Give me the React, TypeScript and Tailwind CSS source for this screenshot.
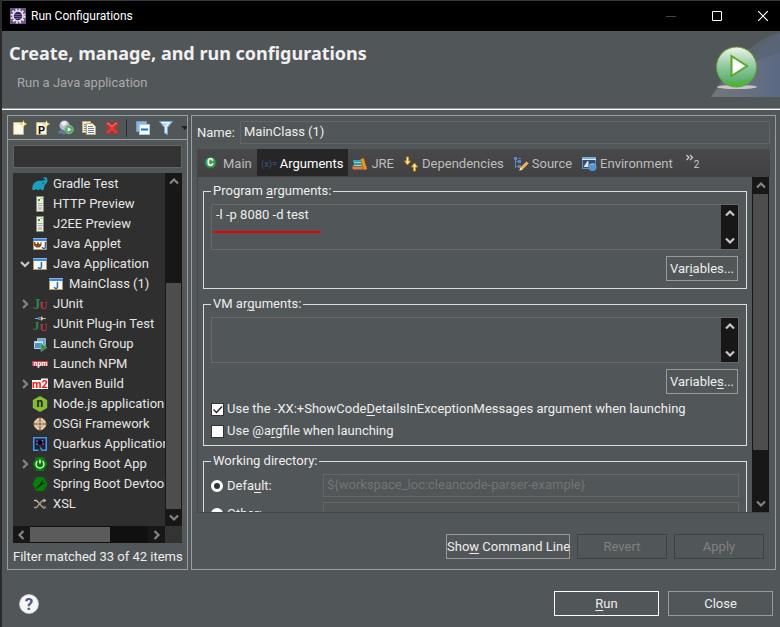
import React from "react";

type IconProps = { children: React.ReactNode; className?: string };

const Icon = ({ children, className = "size-4" }: IconProps) => (
  <svg viewBox="0 0 16 16" className={`${className} shrink-0`} aria-hidden="true">
    {children}
  </svg>
);

/* toolbar icons */
const NewIcon = ({ proto = false }: { proto?: boolean }) => (
  <Icon>
    <path d="M1.5 2.5h10v12h-10z" fill="#fbf3d5" stroke="#c9b578" />
    <path d="M3 5h6v3h2v5H3z" fill="#fff" opacity=".6" />
    <path d="M11.500 0l1.200 2.800 2.800 1.200-2.800 1.200-1.200 2.800-1.200-2.800L7.500 4l2.800-1.200z" fill="#e8bf45" />
    <path d="M11.500 2v4M9.500 4h4" stroke="#fff" />
    {proto && (
      <text x="3" y="14" fontSize="11" fontWeight="bold" fill="#111">P</text>
    )}
  </Icon>
);

const ExportIcon = () => (
  <Icon>
    <circle cx="6.500" cy="5.500" r="5" fill="#b9bfcc" />
    <path d="M3 3l3-2 3 1-1 3-3 1zM7 7l3-1 1 2-2 2z" fill="#eef0f4" />
    <path d="M0 11l4-1 4 3-2 2-3-2-2 1z" fill="#5d7fa5" />
    <circle cx="11" cy="9.500" r="4.300" fill="#5aa96a" stroke="#8fc797" strokeWidth=".8" />
    <path d="M9.700 7.300l3.600 2.200-3.600 2.200z" fill="#fff" />
  </Icon>
);

const CopyIcon = () => (
  <Icon>
    <path d="M1.500 1.500h8v11h-8z" fill="#f5edcf" stroke="#c2ae77" />
    <path d="M3 4.500h3M3 6.500h3M3 8.500h3M3 10.500h3" stroke="#5f83b5" />
    <path d="M5.500 3.500h6l3 3v8h-9z" fill="#faf5e2" stroke="#bfa972" />
    <path d="M7 6.500h5M7 8.500h6M7 10.500h6M7 12.500h6" stroke="#5f83b5" />
  </Icon>
);

const DeleteIcon = () => (
  <Icon>
    <path
      d="M1.500 4L4 1.500 8 5l4-3.500L14.500 4l-4 4 4 4L12 14.500 8 11l-4 3.500L1.500 12l4-4z"
      fill="#dd3c38"
      stroke="#b8201f"
      strokeWidth=".7"
    />
    <path d="M3 4l1.500-1L8 6.500 11.500 3 13 4" fill="none" stroke="#f47d75" />
  </Icon>
);

const CollapseIcon = () => (
  <Icon>
    <path d="M1.500 1.500h10v10h-10z" fill="#8fb6dc" stroke="#6f9ccb" />
    <path d="M4.500 4.500h10v10h-10z" fill="#f4faff" stroke="#a9c8e6" />
    <path d="M6 9.500h7" stroke="#1b6fb5" strokeWidth="2" />
  </Icon>
);

const FilterIcon = () => (
  <Icon>
    <path d="M1.500 1.500h13l-5 6v7l-3 -1.500v-5.500z" fill="#b9d9f1" stroke="#78a8d0" />
    <path d="M4 2.500h7L8 6.500v6" fill="none" stroke="#fff" />
  </Icon>
);

/* tree icons */
const GradleIcon = () => (
  <Icon>
    <path
      d="M.5 14c-.8-4 .9-7.500 4.300-8.800C7 4.300 9 5 11 4.500c1.500-.3 2.600-.8 2.200-1.600-.3-.5-1-.3-1.300.2L10.800 2.200C12 .6 14.700.8 15.300 3c.8 2.500-.8 4.600-2.600 6-.3 2-.8 3-1.200 5H9.200c0-1.500-2-1.500-2 0H5c0-1.500-2-1.500-2 0z"
      fill="#1b9fc0"
    />
    <circle cx="11" cy="7" r=".7" fill="#2f2f2f" />
  </Icon>
);

const ServerIcon = () => (
  <Icon>
    <path d="M4.500 .5h7v15h-7z" fill="#eef0e2" stroke="#8a8d70" />
    <path d="M6 3h2v2H6z" fill="#2ea52f" />
    <path d="M8.500 2.500h2M6 7.500h4.500M6 9.500h4.500" stroke="#9aa9b8" />
    <path d="M6 11h4v3H6z" fill="#bac4cf" />
  </Icon>
);

const JavaWindowIcon = ({ applet = false }: { applet?: boolean }) => (
  <Icon>
    <path d="M1.500 2.500h13v11h-13z" fill="#f3f8fd" stroke="#b49b62" />
    <path d="M1 2h14v3H1z" fill="#3f86cd" />
    <path d="M1 2.500h14" stroke="#83b5e6" />
    {applet && <path d="M2 6h1.500v2h1.500V6.500H7V8h1.500V6H9.500v3.500L7.500 11.500h-3L2 9.500z" fill="#8b4a1c" />}
    <text x={applet ? 9.5 : 5.5} y="12.500" fontSize="9" fontWeight="bold" fill="#245b9b">J</text>
  </Icon>
);

const JUnitIcon = ({ plugin = false }: { plugin?: boolean }) => (
  <Icon>
    {plugin && (
      <>
        <path d="M3 2.500h11" stroke="#93a8d4" />
        <path d="M6 1h4v3H6z" fill="#4f73c2" />
        <path d="M9 0l3 2.500L9 5z" fill="#edc85a" />
      </>
    )}
    <text x="1" y={plugin ? 14 : 13} fontSize={plugin ? 13 : 15} fontFamily="Liberation Serif" fontWeight="bold" fill="#278354">J</text>
    <text x="7.500" y={plugin ? 15 : 13} fontSize="11" fontFamily="Liberation Serif" fontWeight="bold" fill="#ba354a">U</text>
  </Icon>
);

const LaunchGroupIcon = () => (
  <Icon>
    <path d="M5.500 2.500h8v7h-8z" fill="#6fa8d2" stroke="#b2cfe4" strokeWidth=".7" />
    <path d="M2.500 5.500h8v7h-8z" fill="#4f91c5" stroke="#b5d3e8" />
    <path d="M3 6.500h7" stroke="#d6e9f5" />
    <path d="M9 7.500l6 4-6 4z" fill="#36914d" stroke="#77b886" strokeWidth=".6" />
  </Icon>
);

const NpmIcon = () => (
  <Icon>
    <path d="M0 5h16v5H8v1H5v-1H0z" fill="#c23b40" />
    <text x="1.500" y="9.500" fontSize="7" fontWeight="bold" fill="#fff">npm</text>
  </Icon>
);

const MavenIcon = () => (
  <Icon>
    <path d="M0 4h9V2.500h7V13H0z" fill="#fff" />
    <text x="0" y="12" fontSize="11" fontWeight="bold" fill="#ee1717">m2</text>
  </Icon>
);

const NodeIcon = () => (
  <Icon>
    <path d="M8 0l7.200 4v8L8 16 .8 12V4z" fill="#85bd39" />
    <text x="4.500" y="11" fontSize="12" fontWeight="bold" fill="#1e2b12">n</text>
  </Icon>
);

const OsgiIcon = () => (
  <Icon>
    <circle cx="8" cy="8" r="6" fill="#e9c9a7" stroke="#b88a66" />
    <path d="M6 2.500v11M10 2.500v11M2.500 6h11M2.500 10h11" stroke="#fff1df" strokeWidth=".8" />
    <circle cx="8" cy="8" r="3.500" fill="none" stroke="#b88a66" strokeWidth=".8" />
    <path d="M8 1.500v13M1.500 8h13" stroke="#7d5c4a" />
  </Icon>
);

const QuarkusIcon = () => (
  <Icon>
    <path d="M6.500 14.250H1.750V1.750h12.500v12.500H10L8.500 11.500" fill="#17233c" stroke="#4796ed" strokeWidth="1.500" />
    <path d="M8 4l2 1.500v2L8 9 6 7.500v-2z" fill="#05080f" />
    <path d="M5 4v2M11 7v2" stroke="#ed2451" strokeWidth="1.400" />
    <path d="M10.500 4v1.500M5 7.500v1.500" stroke="#55a3f5" strokeWidth="1.300" />
    <path d="M7.300 10h1.400" stroke="#ed2451" />
  </Icon>
);

const SpringIcon = ({ tools = false }: { tools?: boolean }) => (
  <Icon>
    <path d="M4.500 1.500h7L15 8l-3.500 6.500h-7L1 8z" fill="#087d0b" stroke="#087d0b" strokeLinejoin="round" />
    {tools ? (
      <path d="M4 12l5-5q-.5-2.500 2.500-3l-1 2 1 1 1.500-1q0 3-3 2.500l-5 4.500z" fill="#082d0b" />
    ) : (
      <>
        <path d="M5.500 5a4 4 0 105 0" fill="none" stroke="#e9f5e9" strokeWidth="1.300" />
        <path d="M8 3.500v4" stroke="#fff" strokeWidth="1.400" />
      </>
    )}
  </Icon>
);

const XslIcon = () => (
  <Icon>
    <path d="M2 4.500h2.500l6.500 7h3M2 11.500h2.500l6-7h3" fill="none" stroke="#a99d83" strokeWidth="1.300" />
    <path d="M11.500 2.500l3 2-3 2z" fill="#c5b897" />
    <path d="M11.500 9.500l3 2-3 2z" fill="#6f8a80" />
    <path d="M2 4.500h2.500l2 2.200" fill="none" stroke="#dbcba5" />
  </Icon>
);

/* tab icons */
const MainTabIcon = () => (
  <Icon>
    <circle cx="6.500" cy="6.500" r="5.500" fill="#3d9a50" stroke="#277b3c" />
    <text x="3" y="10" fontSize="10" fontWeight="bold" fill="#fff">C</text>
  </Icon>
);

const ArgsIcon = () => (
  <Icon>
    <text x="0" y="11" fontSize="9" fontWeight="bold" fill="#37496d">(x)=</text>
  </Icon>
);

const JreIcon = () => (
  <Icon>
    <path d="M0 10.500h11v3H1z" fill="#d68052" stroke="#a9593a" strokeWidth=".6" />
    <path d="M2 7h8v3H1z" fill="#279f9c" />
    <path d="M1 4h8v2.500H1z" fill="#38a4bb" />
    <path d="M2 9.500h8M2 6.500h7" stroke="#d6e7dc" strokeWidth=".7" />
    <path d="M8.500 3.500l3-1.500 3.500 11-3 1z" fill="#e89a25" stroke="#b96e1c" strokeWidth=".6" />
  </Icon>
);

const DepsIcon = () => (
  <Icon>
    <path d="M3.500 1h2v4h2l-3 4-3-4h2z" fill="#ffe398" stroke="#d79119" strokeWidth=".9" />
    <path d="M10.500 15h2v-4h2l-3-4-3 4h2z" fill="#ffe398" stroke="#d79119" strokeWidth=".9" />
  </Icon>
);

const SourceIcon = () => (
  <Icon>
    <path d="M2.500 2v10M2.500 5.500h4M2.500 10.500h3M5 2.500h3" fill="none" stroke="#5e82c4" />
    <path d="M1 1h3v3H1zM5 4h3v3H5zM5 9h3v3H5z" fill="#5b84cc" />
    <path d="M6.500 14.500l1-3 6-6 2 2-6 6z" fill="#eeb463" stroke="#bd813b" strokeWidth=".6" />
    <path d="M6.500 14.500l1-3 2 2z" fill="#fce8c7" />
  </Icon>
);

const EnvIcon = () => (
  <Icon>
    <path d="M1.500 1.500h13v11h-13z" fill="#39496a" stroke="#5a8fca" />
    <path d="M1 1h14v3H1z" fill="#6fb0ea" />
    <path d="M1 3.500h14" stroke="#e3effa" />
    <path d="M2.500 11l4-6h1v6z" fill="#dfe6f0" />
    <circle cx="11.500" cy="11" r="4" fill="#5797cf" />
    <path d="M9.500 9q2-2 4 0" fill="none" stroke="#83c0e5" />
  </Icon>
);

const chevrons = {
  up: "M4 10l4-4 4 4",
  down: "M4 6l4 4 4-4",
  left: "M10 4L6 8l4 4",
  right: "M6 4l4 4-4 4",
};

const Chevron = ({ dir, className = "size-4" }: { dir: keyof typeof chevrons; className?: string }) => (
  <Icon className={className}>
    <path d={chevrons[dir]} fill="none" stroke="currentColor" strokeWidth="2.200" />
  </Icon>
);

/* a "&" in the text underlines the letter after it */
const Label = ({ text }: { text: string }) => {
  const [before, after] = text.split("&");
  if (after === undefined) return <>{text}</>;
  return (
    <>
      {before}
      <span className="underline underline-offset-2">{after[0]}</span>
      {after.slice(1)}
    </>
  );
};

const treeItems = [
  { name: "Gradle Test", icon: <GradleIcon /> },
  { name: "HTTP Preview", icon: <ServerIcon /> },
  { name: "J2EE Preview", icon: <ServerIcon /> },
  { name: "Java Applet", icon: <JavaWindowIcon applet /> },
  { name: "Java Application", icon: <JavaWindowIcon />, arrow: "open" },
  { name: "MainClass (1)", icon: <JavaWindowIcon />, child: true },
  { name: "JUnit", icon: <JUnitIcon />, arrow: "closed" },
  { name: "JUnit Plug-in Test", icon: <JUnitIcon plugin /> },
  { name: "Launch Group", icon: <LaunchGroupIcon /> },
  { name: "Launch NPM", icon: <NpmIcon /> },
  { name: "Maven Build", icon: <MavenIcon />, arrow: "closed" },
  { name: "Node.js application", icon: <NodeIcon /> },
  { name: "OSGi Framework", icon: <OsgiIcon /> },
  { name: "Quarkus Application", icon: <QuarkusIcon /> },
  { name: "Spring Boot App", icon: <SpringIcon />, arrow: "closed" },
  { name: "Spring Boot Devtools", icon: <SpringIcon tools /> },
  { name: "XSL", icon: <XslIcon /> },
];

const tools = [
  { name: "New configuration", icon: <NewIcon /> },
  { name: "New prototype", icon: <NewIcon proto /> },
  { name: "Export", icon: <ExportIcon /> },
  { name: "Duplicate", icon: <CopyIcon /> },
  { name: "Delete", icon: <DeleteIcon /> },
];

const tabs = [
  { name: "Main", icon: <MainTabIcon /> },
  { name: "Arguments", icon: <ArgsIcon />, active: true },
  { name: "JRE", icon: <JreIcon /> },
  { name: "Dependencies", icon: <DepsIcon /> },
  { name: "Source", icon: <SourceIcon /> },
  { name: "Environment", icon: <EnvIcon /> },
];

const TitleBar = () => (
  <div className="flex h-[31px] shrink-0 items-center border-t border-[#3a3a3a] bg-black pr-3 pl-2 text-white">
    <svg viewBox="0 0 16 16" className="size-4" aria-hidden="true">
      <path d="M0 0h16v16H0z" fill="#69528a" />
      <circle cx="8" cy="8" r="6.500" fill="none" stroke="#e8e5ee" strokeWidth="2" strokeDasharray="1.800 1.600" />
      <circle cx="8" cy="8" r="5" fill="#31264d" stroke="#efedf3" strokeWidth="1.500" />
      <path d="M4 6.500h8M4 8.500h8M5 10.500h6" stroke="#786aa0" strokeWidth=".8" />
    </svg>
    <h1 className="ml-[5px] text-xs">Run Configurations</h1>
    <div className="ml-auto flex gap-9">
      <button aria-label="Minimize" className="text-[#444]">
        <svg viewBox="0 0 10 10" className="size-[10px]"><path d="M0 5.500h10" stroke="currentColor" /></svg>
      </button>
      <button aria-label="Maximize">
        <svg viewBox="0 0 10 10" className="size-[10px]"><path d="M.5 .5h9v9h-9z" fill="none" stroke="currentColor" /></svg>
      </button>
      <button aria-label="Close window">
        <svg viewBox="0 0 10 10" className="size-[10px]"><path d="M0 0l10 10M10 0L0 10" stroke="currentColor" strokeWidth="1.200" /></svg>
      </button>
    </div>
  </div>
);

const Header = () => (
  <header className="flex h-[79px] shrink-0 justify-between border-b border-white bg-[#515658] shadow-[inset_0_-1px_0_#929596]">
    <div className="pt-2 pl-[7px]">
      <h2 className="font-['Noto_Sans',sans-serif] text-lg leading-7 font-bold text-[#f0f0f0]">
        Create, manage, and run configurations
      </h2>
      <p className="mt-[6px] ml-2 leading-5 text-[#aaaaaa]">Run a Java application</p>
    </div>
    <svg viewBox="0 0 70 66" className="h-[66px] w-[70px] shrink-0" aria-hidden="true">
      <defs>
        <linearGradient id="beam" x1="0" x2="1">
          <stop offset="0" stopColor="#777b7d" />
          <stop offset="1" stopColor="#5c6b86" />
        </linearGradient>
        <linearGradient id="ball" x1="0" x2="0" y1="0" y2="1">
          <stop offset="0" stopColor="#eef6e6" />
          <stop offset=".5" stopColor="#8fc69b" />
          <stop offset=".85" stopColor="#5fae74" />
          <stop offset="1" stopColor="#4fb41c" />
        </linearGradient>
      </defs>
      <path d="M1 66Q32 12 70 1v65z" fill="url(#beam)" opacity=".45" />
      <path d="M22 66Q36 20 70 2v64z" fill="#5d6f91" opacity=".3" />
      <path d="M1 66Q26 32 70 22v44z" fill="url(#beam)" opacity=".8" />
      <ellipse cx="27" cy="56" rx="20" ry="2" fill="#c9c5cb" />
      <circle cx="26.500" cy="36" r="20" fill="url(#ball)" stroke="#679d33" />
      <path d="M8 36a18.500 18.500 0 0037 0q-1 14-18.500 15T8 36" fill="#46bc22" opacity=".6" />
      <path d="M21.500 25v20L37 35z" fill="#fff" stroke="#59a62b" strokeWidth="2" />
    </svg>
  </header>
);

const VScroll = ({ thumb, className = "" }: { thumb?: string; className?: string }) => (
  <div className={`flex w-[17px] shrink-0 flex-col items-center bg-[#171717] ${className}`}>
    <Chevron dir="up" className="h-[17px] w-4" />
    <div className="flex w-full min-h-0 flex-1 flex-col px-px">
      {thumb && <div className={`w-full bg-[#4d4d4d] ${thumb}`} />}
    </div>
    <Chevron dir="down" className="h-[17px] w-4" />
  </div>
);

const Sidebar = () => (
  <aside className="flex w-[181px] shrink-0 flex-col border border-[#9a9d9e]">
    <div className="flex h-6 shrink-0 items-center overflow-hidden border-b border-[#9a9d9e] pl-1">
      <div className="flex shrink-0 gap-[7px]">
        {tools.map((tool) => (
          <button key={tool.name} aria-label={tool.name}>{tool.icon}</button>
        ))}
      </div>
      <div className="mr-2 ml-[6px] h-[18px] w-px shrink-0 bg-[#2b2d2e]" />
      <div className="flex shrink-0 gap-[7px]">
        <button aria-label="Collapse all"><CollapseIcon /></button>
        <button aria-label="Filter"><FilterIcon /></button>
        <button aria-label="Filter menu">
          <svg viewBox="0 0 8 4" className="h-1 w-2"><path d="M0 0h8L4 4z" fill="#222" /></svg>
        </button>
      </div>
    </div>
    <div className="flex min-h-0 flex-1 flex-col px-[5px] pt-[5px]">
      <input
        aria-label="Filter configurations"
        className="h-[23px] shrink-0 border border-[#646464] bg-[#333] px-1 outline-none"
      />
      <div className="mt-[5px] flex min-h-0 flex-1 bg-[#2f2f2f]">
        <ul className="min-w-0 flex-1 overflow-hidden pt-px text-[#e6e6e6]">
          {treeItems.map((item) => (
            <li key={item.name} className={`flex h-5 items-center whitespace-nowrap ${item.child ? "pl-5" : "pl-1"}`}>
              <span className={`w-[15px] shrink-0 ${item.arrow === "open" ? "text-[#c8c8c8]" : "text-[#858585]"}`}>
                {item.arrow && <Chevron dir={item.arrow === "open" ? "down" : "right"} />}
              </span>
              {item.icon}
              <span className="ml-[5px]">{item.name}</span>
            </li>
          ))}
        </ul>
        <VScroll thumb="mt-auto h-[71%]" className="text-[#858585]" />
      </div>
      <div className="flex h-[17px] shrink-0 bg-[#333] text-[#858585]">
        <div className="flex min-w-0 flex-1 items-center bg-[#171717]">
          <Chevron dir="left" className="h-4 w-[17px]" />
          <div className="h-full min-w-0 flex-1 bg-[#101010] py-px">
            <div className="h-full w-[68%] bg-[#5b5b5b]" />
          </div>
          <Chevron dir="right" className="h-4 w-[17px]" />
        </div>
        <div className="w-[17px]" />
      </div>
      <p className="h-[26px] shrink-0 pt-1 leading-5 whitespace-nowrap">Filter matched 33 of 42 items</p>
    </div>
  </aside>
);

const ArgsBox = ({ title, value, button, children }: { title: string; value: string; button: string; children?: React.ReactNode }) => (
  <fieldset className="min-w-0 border border-[#dcdcdc] px-[7px] pb-[7px]">
    <legend className="h-4 px-[2px] leading-4"><Label text={title} /></legend>
    <div className="relative mt-[5px] flex h-[46px] border border-[#696765]">
      <textarea
        aria-label={title.replace("&", "")}
        defaultValue={value}
        className="min-w-0 flex-1 resize-none overflow-hidden bg-transparent px-1 leading-5 outline-none"
      />
      <VScroll className="text-[#c8c8c8]" />
      {value && <div className="absolute top-[26px] left-px h-[2px] w-[108px] rounded-full bg-[#f00000]" />}
    </div>
    <button className="mt-[6px] mr-px ml-auto block h-[25px] w-[72px] border border-[#9a9a9a]">
      <Label text={button} />
    </button>
    {children}
  </fieldset>
);

const Check = ({ text, checked = false }: { text: string; checked?: boolean }) => (
  <label className="relative flex h-[22px] items-center gap-[3px] whitespace-nowrap">
    <input type="checkbox" defaultChecked={checked} className="peer size-[13px] appearance-none border border-[#333] bg-white" />
    <svg viewBox="0 0 13 13" className="invisible absolute left-0 size-[13px] peer-checked:visible" aria-hidden="true">
      <path d="M2.500 6.500l3 3 5.500-6" fill="none" stroke="#222" strokeWidth="1.300" />
    </svg>
    <span><Label text={text} /></span>
  </label>
);

const DirRow = ({ text, value, checked = false }: { text: string; value: string; checked?: boolean }) => (
  <div className="flex h-[23px] items-center">
    <label className="flex w-28 items-center gap-1">
      <input
        type="radio"
        name="directory"
        defaultChecked={checked}
        className="size-3 appearance-none rounded-full border-[3px] border-white bg-white checked:bg-[#333]"
      />
      <span><Label text={text} /></span>
    </label>
    <input
      aria-label={text.replace("&", "") + " path"}
      disabled
      defaultValue={value}
      className="h-full min-w-0 flex-1 border border-[#686664] bg-transparent px-[3px] pb-[2px] text-[#747474]"
    />
  </div>
);

const MainPanel = () => (
  <main className="flex min-w-0 flex-1 flex-col border border-[#9a9d9e] pt-[5px] pr-[5px] pb-[10px] pl-[5px]">
    <div className="flex h-[23px] shrink-0 items-center">
      <label htmlFor="config-name" className="w-[43px]">Name:</label>
      <input
        id="config-name"
        defaultValue="MainClass (1)"
        className="h-full min-w-0 flex-1 border border-[#646464] bg-transparent px-[3px] pb-[2px] outline-none"
      />
    </div>
    <div className="mt-[5px] flex h-7 shrink-0 bg-linear-to-b from-[#49494b] to-[#414143] pl-[3px]" role="tablist">
      {tabs.map((tab) => (
        <button
          key={tab.name}
          role="tab"
          aria-selected={!!tab.active}
          className={`flex h-[27px] items-center gap-[3px] pt-[3px] pr-[5px] pl-1 whitespace-nowrap ${
            tab.active ? "bg-[#262626] text-white" : "text-[#bdbdbd]"
          }`}
        >
          {tab.icon}
          <span>{tab.name}</span>
        </button>
      ))}
      <button aria-label="2 more tabs" className="ml-2 flex text-[#cccccc]">
        <Icon className="mt-[5px] h-2 w-2">
          <path d="M1 2l5 5-5 5M8 2l5 5-5 5" fill="none" stroke="currentColor" strokeWidth="2.500" />
        </Icon>
        <span className="mt-2 text-[10px] leading-4">2</span>
      </button>
    </div>
    <div className="flex min-h-0 flex-1 border-b border-l border-[#46494b]">
      <div className="flex min-w-0 flex-1 flex-col gap-[7px] overflow-hidden pt-[6px] pr-[5px] pl-[5px]">
        <ArgsBox title="Program &arguments:" value="-l -p 8080 -d test" button="Var&iables..." />
        <ArgsBox title="VM ar&guments:" value="" button="Variable&s...">
          <div className="-mb-1 pt-1">
            <Check checked text="Use the -XX:+ShowCode&DetailsInExceptionMessages argument when launching" />
            <Check text="Use @a&rgfile when launching" />
          </div>
        </ArgsBox>
        <fieldset className="min-w-0 border border-[#dcdcdc] px-[7px] pb-[7px]">
          <legend className="h-4 px-[2px] leading-4">Working directory:</legend>
          <div className="mt-[5px] flex flex-col gap-[5px]">
            <DirRow checked text="Defa&ult:" value="${workspace_loc:cleancode-parser-example}" />
            <DirRow text="Other:" value="" />
          </div>
        </fieldset>
      </div>
      <VScroll thumb="h-[85%]" className="mr-px text-[#858585]" />
    </div>
    <div className="mt-[21px] mr-[6px] flex shrink-0 justify-end gap-[7px]">
      <button className="h-[25px] w-[124px] border border-[#9a9a9a] whitespace-nowrap"><Label text="Sho&w Command Line" /></button>
      <button disabled className="h-[25px] w-[90px] border border-[#3f4243] text-[#808080]">Revert</button>
      <button disabled className="h-[25px] w-[90px] border border-[#3f4243] text-[#808080]">Apply</button>
    </div>
  </main>
);

const Footer = () => (
  <footer className="flex h-[57px] shrink-0 items-center gap-[9px] pt-[10px] pr-[7px] pl-[17px]">
    <button aria-label="Help" className="mr-auto">
      <svg viewBox="0 0 20 20" className="size-5">
        <circle cx="10" cy="10" r="9.500" fill="#f5f6f8" stroke="#c5c9d0" strokeWidth=".8" />
        <text x="10" y="16" textAnchor="middle" fontSize="17" fontWeight="bold" fill="#4d5a7d">?</text>
      </svg>
    </button>
    <button className="h-[25px] w-[105px] border border-white"><Label text="&Run" /></button>
    <button className="h-[25px] w-[105px] border border-[#9a9a9a]">Close</button>
  </footer>
);

const App = () => {
  return (
    <div className="flex h-screen flex-col border-l-2 border-[#2b2b2b] bg-[#515658] font-[Roboto,sans-serif] text-[13px] text-[#eeeeee]">
      <TitleBar />
      <Header />
      <div className="flex min-h-0 flex-1 gap-[3px] pt-[5px] pr-1 pl-[5px]">
        <Sidebar />
        <MainPanel />
      </div>
      <Footer />
    </div>
  );
};

export default App;
